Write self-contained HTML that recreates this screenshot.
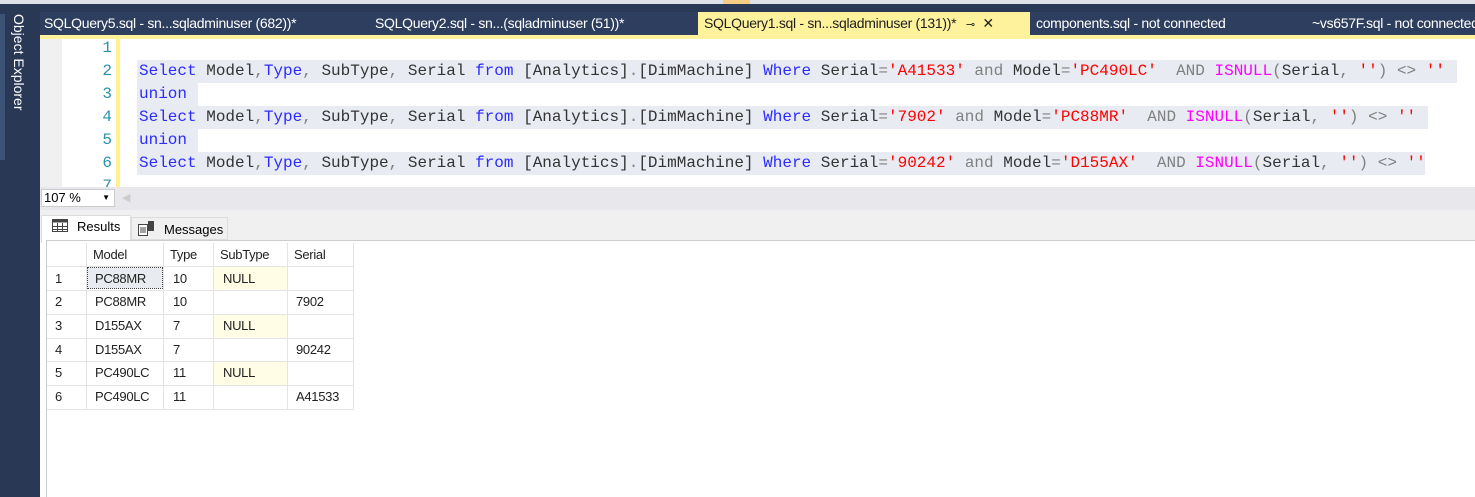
<!DOCTYPE html>
<html><head><style>
*{margin:0;padding:0;box-sizing:border-box}
body{width:1475px;height:497px;overflow:hidden;background:#fff;font-family:"Liberation Sans",sans-serif;position:relative}
.abs{position:absolute}
.code{font-family:"Liberation Mono",monospace;font-size:16px;line-height:23px;white-space:pre;color:#333}
.k{color:#2b2bff}.s{color:#ff0000}.g{color:#808080}.f{color:#ff00ff}
.tab{position:absolute;top:12px;height:23px;color:#fff;font-size:14px;line-height:23px;white-space:nowrap;letter-spacing:-0.3px}
.cell{position:absolute;font-size:13px;color:#222;line-height:23px;letter-spacing:-0.3px}
</style></head><body>
<div class="abs" style="left:0;top:0;width:1475px;height:4px;background:#dde1e8"></div>
<div class="abs" style="left:0;top:4px;width:1475px;height:8px;background:#293955"></div>
<div class="abs" style="left:723px;top:0;width:27px;height:4px;background:#f5cc84"></div>
<div class="abs" style="left:0;top:12px;width:40px;height:485px;background:#293955"></div>
<div class="abs" style="left:0;top:14px;width:5px;height:146px;background:#3d5277"></div>
<div class="abs" style="left:12px;top:14px;color:#fff;font-size:14px;transform-origin:0 0;transform:translate(15px,0) rotate(90deg);white-space:nowrap">Object Explorer</div>
<div class="abs" style="left:40px;top:12px;width:1435px;height:23px;background:#2d3e5e"></div>
<div class="tab" style="left:44px">SQLQuery5.sql - sn...sqladminuser (682))*</div>
<div class="tab" style="left:375px">SQLQuery2.sql - sn...(sqladminuser (51))*</div>
<div class="abs" style="left:698px;top:12px;width:332px;height:23px;background:#fff29d"></div>
<div class="tab" style="left:704px;color:#1e1e1e">SQLQuery1.sql - sn...sqladminuser (131))* <span style="font-size:11px;margin-left:6px">⊸</span> <span style="margin-left:4px">✕</span></div>
<div class="tab" style="left:1036px">components.sql - not connected</div>
<div class="tab" style="left:1312px">~vs657F.sql - not connected</div>
<div class="abs" style="left:40px;top:35px;width:1435px;height:4px;background:#fff29d"></div>
<div class="abs" style="left:40px;top:39px;width:22px;height:148px;background:#f0f0f0"></div>
<div class="abs" style="left:116px;top:39px;width:4px;height:148px;background:#fff38a"></div>
<div class="abs code" style="left:90px;top:37px;color:#2b91af;text-align:right;width:22px">1
2
3
4
5
6
7</div>
<div class="abs" style="left:137px;top:60px;width:1320px;height:23px;background:#e8ecf2"></div>
<div class="abs" style="left:137px;top:83px;width:61px;height:23px;background:#e8ecf2"></div>
<div class="abs" style="left:137px;top:106px;width:1291px;height:23px;background:#e8ecf2"></div>
<div class="abs" style="left:137px;top:129px;width:61px;height:23px;background:#e8ecf2"></div>
<div class="abs" style="left:137px;top:152px;width:1288px;height:23px;background:#e8ecf2"></div>
<div class="abs code" style="left:139px;top:60px"><span class="k">Select</span> Model<span class="g">,</span><span class="k">Type</span><span class="g">,</span> SubType<span class="g">,</span> Serial <span class="k">from</span> [Analytics]<span class="g">.</span>[DimMachine] <span class="k">Where</span> Serial<span class="g">=</span><span class="s">'A41533'</span> <span class="g">and</span> Model<span class="g">=</span><span class="s">'PC490LC'</span>  <span class="g">AND</span> <span class="f">ISNULL</span><span class="g">(</span>Serial<span class="g">,</span> <span class="s">''</span><span class="g">)</span> <span class="g">&lt;&gt;</span> <span class="s">''</span>
<span class="k">union</span>
<span class="k">Select</span> Model<span class="g">,</span><span class="k">Type</span><span class="g">,</span> SubType<span class="g">,</span> Serial <span class="k">from</span> [Analytics]<span class="g">.</span>[DimMachine] <span class="k">Where</span> Serial<span class="g">=</span><span class="s">'7902'</span> <span class="g">and</span> Model<span class="g">=</span><span class="s">'PC88MR'</span>  <span class="g">AND</span> <span class="f">ISNULL</span><span class="g">(</span>Serial<span class="g">,</span> <span class="s">''</span><span class="g">)</span> <span class="g">&lt;&gt;</span> <span class="s">''</span>
<span class="k">union</span>
<span class="k">Select</span> Model<span class="g">,</span><span class="k">Type</span><span class="g">,</span> SubType<span class="g">,</span> Serial <span class="k">from</span> [Analytics]<span class="g">.</span>[DimMachine] <span class="k">Where</span> Serial<span class="g">=</span><span class="s">'90242'</span> <span class="g">and</span> Model<span class="g">=</span><span class="s">'D155AX'</span>  <span class="g">AND</span> <span class="f">ISNULL</span><span class="g">(</span>Serial<span class="g">,</span> <span class="s">''</span><span class="g">)</span> <span class="g">&lt;&gt;</span> <span class="s">''</span></div>
<div class="abs" style="left:40px;top:187px;width:1435px;height:23px;background:#e8e8ec"></div>
<div class="abs" style="left:41px;top:189px;width:74px;height:18px;background:#fff;border:1px solid #ccc;font-size:13px;line-height:16px;padding-left:2px">107 %<span style="position:absolute;right:4px;font-size:8px">▼</span></div>
<div class="abs" style="left:122px;top:191px;color:#ccc;font-size:11px">◀</div>
<div class="abs" style="left:40px;top:210px;width:1435px;height:30px;background:#f0f0f0"></div>
<div class="abs" style="left:41px;top:215px;width:90px;height:28px;background:#fff;border:1px solid #ddd;border-bottom:none"></div>
<div class="abs" style="left:131px;top:217px;width:97px;height:23px;background:#f0f0f0;border:1px solid #ddd"></div>
<svg class="abs" style="left:52px;top:219px" width="16" height="13"><rect x="0.5" y="0.5" width="15" height="12" fill="#fff" stroke="#444"/><rect x="0.5" y="0.5" width="15" height="3" fill="#444"/><path d="M5.5 4v9M10.5 4v9M0 7.5h16M0 10.5h16" stroke="#444"/></svg>
<div class="abs" style="left:77px;top:219px;font-size:13px">Results</div>
<svg class="abs" style="left:137px;top:220px" width="20" height="16"><rect x="1.5" y="4.5" width="9" height="11" fill="#fff" stroke="#444"/><path d="M3 8h6M3 10h6M3 12h6" stroke="#444"/><rect x="11" y="1" width="6" height="10" fill="#444"/></svg>
<div class="abs" style="left:164px;top:222px;font-size:13px">Messages</div>
<div class="abs" style="left:46px;top:240px;width:1429px;height:257px;background:#fff;border-top:1px solid #ccc;border-left:1px solid #ccc"></div>
<div class="abs" style="left:213px;top:266px;width:74px;height:24px;background:#fffde5"></div>
<div class="abs" style="left:213px;top:314px;width:74px;height:24px;background:#fffde5"></div>
<div class="abs" style="left:213px;top:361px;width:74px;height:24px;background:#fffde5"></div>
<div class="abs" style="left:87px;top:267px;width:76px;height:22px;background:#e8ecf0;border:1px dotted #444"></div>
<svg class="abs" style="left:47px;top:243px" width="307" height="167"><g stroke="#e4e4e4" fill="none"><path d="M39.5 0v166M116.5 0v166M166.5 0v166M240.5 0v166M306.5 0v166"/><path d="M0 23.5h307M0 47.5h307M0 71.5h307M0 95.5h307M0 118.5h307M0 142.5h307M0 166.5h307"/></g></svg>
<div class="cell" style="left:93px;top:243px">Model</div>
<div class="cell" style="left:170px;top:243px">Type</div>
<div class="cell" style="left:220px;top:243px">SubType</div>
<div class="cell" style="left:294px;top:243px">Serial</div>
<div class="cell" style="left:55px;top:267px">1</div><div class="cell" style="left:95px;top:267px">PC88MR</div><div class="cell" style="left:173px;top:267px">10</div><div class="cell" style="left:223px;top:267px">NULL</div>
<div class="cell" style="left:55px;top:290px">2</div><div class="cell" style="left:95px;top:290px">PC88MR</div><div class="cell" style="left:173px;top:290px">10</div><div class="cell" style="left:296px;top:290px">7902</div>
<div class="cell" style="left:55px;top:314px">3</div><div class="cell" style="left:95px;top:314px">D155AX</div><div class="cell" style="left:173px;top:314px">7</div><div class="cell" style="left:223px;top:314px">NULL</div>
<div class="cell" style="left:55px;top:338px">4</div><div class="cell" style="left:95px;top:338px">D155AX</div><div class="cell" style="left:173px;top:338px">7</div><div class="cell" style="left:296px;top:338px">90242</div>
<div class="cell" style="left:55px;top:361px">5</div><div class="cell" style="left:95px;top:361px">PC490LC</div><div class="cell" style="left:173px;top:361px">11</div><div class="cell" style="left:223px;top:361px">NULL</div>
<div class="cell" style="left:55px;top:385px">6</div><div class="cell" style="left:95px;top:385px">PC490LC</div><div class="cell" style="left:173px;top:385px">11</div><div class="cell" style="left:296px;top:385px">A41533</div>
</body></html>
